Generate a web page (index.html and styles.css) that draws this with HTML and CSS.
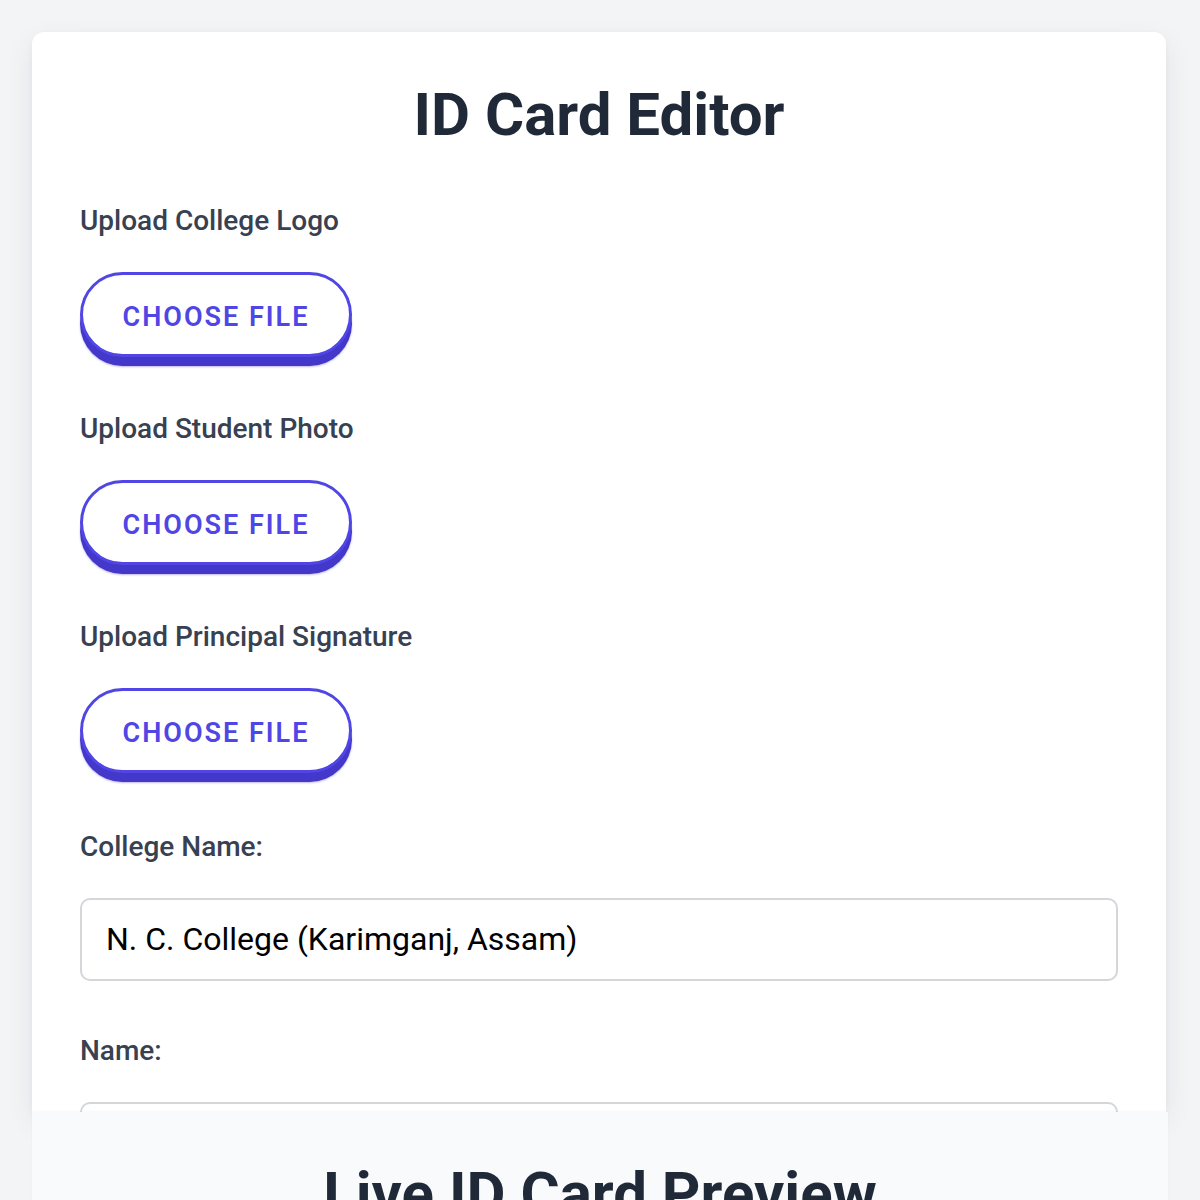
FILE: index.html
```html
<!DOCTYPE html>
<html lang="en">
<head>
<meta charset="utf-8">
<title>ID Card Editor</title>
<link rel="stylesheet" href="styles.css">
</head>
<body>
<div class="page">
  <section class="editor">
    <h1 class="title">ID Card Editor</h1>

    <div class="upload-group">
      <label class="label">Upload College Logo</label>
      <button class="file-btn" type="button">Choose File</button>
    </div>

    <div class="upload-group">
      <label class="label">Upload Student Photo</label>
      <button class="file-btn" type="button">Choose File</button>
    </div>

    <div class="upload-group">
      <label class="label">Upload Principal Signature</label>
      <button class="file-btn" type="button">Choose File</button>
    </div>

    <div class="field-group">
      <label class="label">College Name:</label>
      <input class="text-input" type="text" value="N. C. College (Karimganj, Assam)">
    </div>

    <div class="field-group">
      <label class="label">Name:</label>
      <input class="text-input" type="text" value="">
    </div>
  </section>

  <section class="preview">
    <h2 class="title">Live ID Card Preview</h2>
  </section>
</div>
</body>
</html>
```

FILE: styles.css
```css
* {
  box-sizing: border-box;
}

html, body {
  margin: 0;
  padding: 0;
  background: #f3f4f6;
  font-family: Roboto, "Liberation Sans", Arial, sans-serif;
}

.page {
  padding: 32px 0 0 32px;
  width: 1200px;
  height: 1200px;
  overflow: hidden;
}

.editor {
  width: 1134px;
  height: 1080px;
  overflow: hidden;
  background: #ffffff;
  border-radius: 12px 12px 0 0;
  padding: 48px 48px 0 48px;
  box-shadow: 0 10px 30px rgba(17, 24, 39, 0.07), 0 2px 6px rgba(17, 24, 39, 0.04);
}

.title {
  margin: 0;
  text-align: center;
  font-size: 60px;
  line-height: 70px;
  font-weight: 700;
  color: #1f2937;
}

.editor .title {
  margin-bottom: 55px;
}

.label {
  display: block;
  font-size: 28px;
  line-height: 32px;
  font-weight: 500;
  color: #374151;
}

.upload-group {
  margin-bottom: 56px;
}

.upload-group .label {
  margin-bottom: 35px;
}

.file-btn {
  display: block;
  width: 272px;
  height: 85px;
  padding: 4px 0 0;
  background: #ffffff;
  border: 3px solid #4f46e5;
  border-radius: 44px;
  box-shadow: 0 9px 0 #4338ca, 0 10px 2px rgba(67, 56, 202, 0.35);
  font-family: Roboto, "Liberation Sans", Arial, sans-serif;
  font-size: 27px;
  font-weight: 600;
  letter-spacing: 2px;
  text-transform: uppercase;
  color: #4f46e5;
  cursor: pointer;
}

.upload-group + .field-group {
  padding-top: 2px;
}

.field-group {
  margin-bottom: 54px;
}

.field-group .label {
  margin-bottom: 35px;
}

.text-input {
  display: block;
  width: 100%;
  height: 83px;
  padding: 0 24px 2px;
  border: 2px solid #d4d6da;
  border-radius: 10px;
  background: #ffffff;
  font-family: Roboto, "Liberation Sans", Arial, sans-serif;
  font-size: 32px;
  color: #000000;
  outline: none;
}

.preview {
  width: 1136px;
  background: #f8fafc;
  padding: 47px 48px 48px;
  box-shadow: 0 -1px 2px rgba(17, 24, 39, 0.03);
  min-height: 300px;
}
```
